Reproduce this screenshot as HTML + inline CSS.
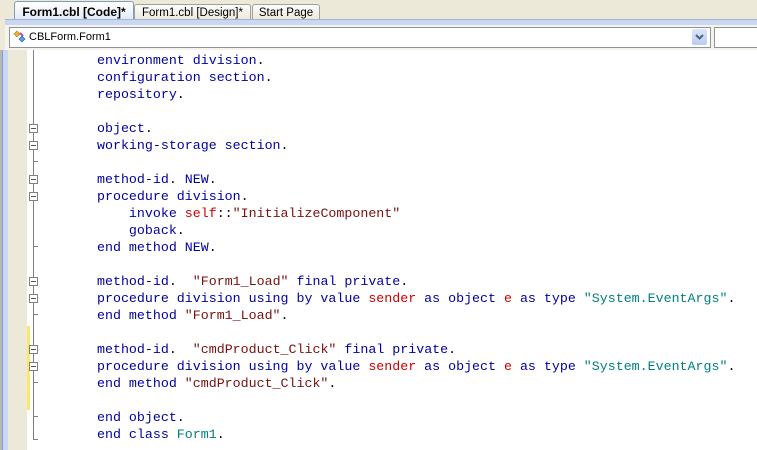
<!DOCTYPE html><html><head><style>
body{margin:0;width:757px;height:450px;overflow:hidden;background:#ece9d8;position:relative;font-family:"Liberation Sans",sans-serif}
.a{position:absolute}
.tab{position:absolute;top:4px;height:15px;border:1px solid #a0a0a0;border-bottom:none;background:linear-gradient(#fcfcfb,#ece9d8);font-size:11.5px;line-height:17px;text-align:center;border-radius:3px 3px 0 0}
.code{position:absolute;left:97px;top:52px;font-family:"Liberation Mono",monospace;font-size:13.3px;line-height:17px;color:#0000a0;white-space:pre;letter-spacing:0}
.r{color:#d00000}.s{color:#7a1010}.t{color:#008080}.k{color:#000}
.box{position:absolute;left:29px;width:7px;height:7px;border:1px solid #808080;background:#fff}
.box:after{content:"";position:absolute;left:1px;top:3px;width:5px;height:1px;background:#555}
.tk{position:absolute;left:33px;width:5px;height:1px;background:#808080}
</style></head><body>
<div class="tab" style="left:14px;top:1px;height:19px;width:118px;background:linear-gradient(#fff,#dfe8f6);font-weight:bold;font-size:12px;line-height:20px;border-color:#7f9db9">Form1.cbl [Code]*</div>
<div class="tab" style="left:134px;width:115px">Form1.cbl [Design]*</div>
<div class="tab" style="left:252px;width:66px">Start Page</div>
<div class="a" style="left:5px;top:19px;width:752px;height:5px;background:#c9d8f0;border-top:1px solid #9fb5d8"></div>
<div class="a" style="left:5px;top:25px;width:752px;height:25px;background:#f4f3ee"></div>
<div class="a" style="left:9px;top:27px;width:700px;height:19px;background:#fff;border:1px solid #8f9496"></div>
<div class="a" style="left:13px;top:30px;width:14px;height:14px">
<svg width="14" height="14"><path d="M1 4 L4 1 L7 4 L4 7Z" fill="#f0b030" stroke="#b07a10" stroke-width=".6"/><path d="M7 3 L10 6" stroke="#c040c0" stroke-width="2"/><path d="M6 9 L9 6 L12 9 L9 12Z" fill="#58a0e8" stroke="#2050a0" stroke-width=".6"/></svg></div>
<div class="a" style="left:29px;top:30px;font-size:11px;line-height:14px">CBLForm.Form1</div>
<div class="a" style="left:692px;top:29px;width:15px;height:16px;background:linear-gradient(#dce6fa,#b8cdf2);border-radius:2px"><svg width="15" height="16"><path d="M4 6 L7.5 9.5 L11 6" stroke="#4d6185" stroke-width="2" fill="none"/></svg></div>
<div class="a" style="left:714px;top:27px;width:45px;height:19px;background:#fff;border:1px solid #8f9496"></div>
<div class="a" style="left:0;top:50px;width:757px;height:400px;background:#fff"></div>
<div class="a" style="left:0;top:50px;width:2px;height:400px;background:#b8b8b0"></div>
<div class="a" style="left:2px;top:50px;width:5px;height:400px;background:#c8d8f4;border-left:1px solid #7c9fe0"></div>
<div class="a" style="left:8px;top:50px;width:19px;height:400px;background:#ece9d8"></div>
<div class="a" style="left:27px;top:326px;width:3px;height:84px;background:#f8e870"></div>
<div class="a" style="left:33px;top:50px;width:1px;height:390px;background:#808080"></div>
<div class="box" style="top:124px"></div><div class="box" style="top:141px"></div><div class="tk" style="top:161px"></div>
<div class="box" style="top:175px"></div><div class="box" style="top:192px"></div><div class="tk" style="top:246px"></div>
<div class="box" style="top:277px"></div><div class="box" style="top:294px"></div><div class="tk" style="top:314px"></div>
<div class="box" style="top:345px"></div><div class="box" style="top:362px"></div><div class="tk" style="top:382px"></div>
<div class="tk" style="top:416px"></div><div class="tk" style="top:439px"></div>
<div class="code">environment division<span class="k">.</span>
configuration section<span class="k">.</span>
repository<span class="k">.</span>

object<span class="k">.</span>
working-storage section<span class="k">.</span>

method-id<span class="k">.</span> NEW<span class="k">.</span>
procedure division<span class="k">.</span>
    invoke <span class="r">self</span><span class="k">::</span><span class="s">"InitializeComponent"</span>
    goback<span class="k">.</span>
end method NEW<span class="k">.</span>

method-id<span class="k">.</span>  <span class="s">"Form1_Load"</span> final private<span class="k">.</span>
procedure division using by value <span class="r">sender</span> as object <span class="r">e</span> as type <span class="t">"System.EventArgs"</span><span class="k">.</span>
end method <span class="s">"Form1_Load"</span><span class="k">.</span>

method-id<span class="k">.</span>  <span class="s">"cmdProduct_Click"</span> final private<span class="k">.</span>
procedure division using by value <span class="r">sender</span> as object <span class="r">e</span> as type <span class="t">"System.EventArgs"</span><span class="k">.</span>
end method <span class="s">"cmdProduct_Click"</span><span class="k">.</span>

end object<span class="k">.</span>
end class <span class="t">Form1</span><span class="k">.</span></div>
</body></html>
